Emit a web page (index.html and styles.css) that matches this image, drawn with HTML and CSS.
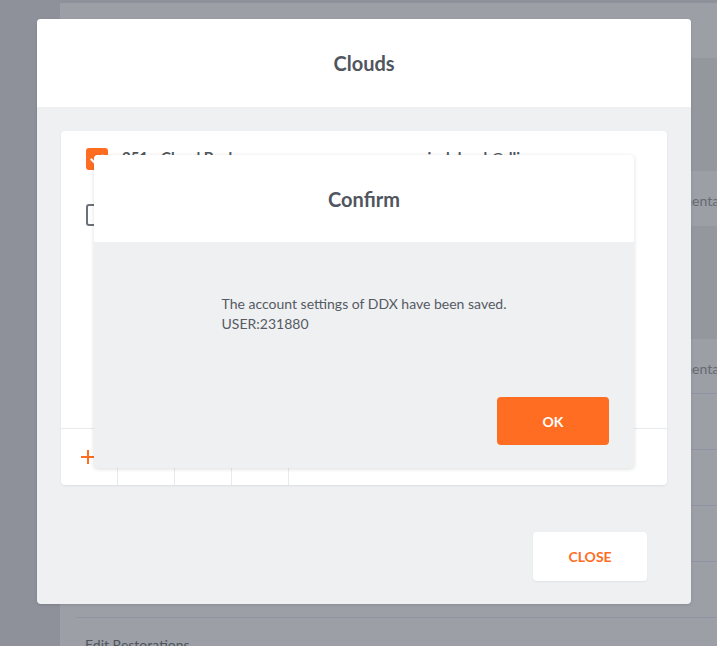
FILE: index.html
```html
<!DOCTYPE html>
<html>
<head>
<meta charset="utf-8">
<link rel="stylesheet" href="styles.css">
</head>
<body>
<div class="page">
  <div class="bg-card">
    <div class="bg-row bg-light"></div>
    <div class="bg-row bg-dark tall"></div>
    <div class="bg-row bg-light"><span class="bg-text">Incrementals</span></div>
    <div class="bg-row bg-dark tall"></div>
    <div class="bg-row bg-light line"><span class="bg-text">Incrementals</span></div>
    <div class="bg-row line"></div>
    <div class="bg-row line"></div>
    <div class="bg-row line"></div>
    <div class="bg-row line"></div>
    <div class="bg-edit">Edit Restorations</div>
  </div>
</div>

<div class="overlay">
  <div class="modal clouds">
    <div class="modal-head">Clouds</div>
    <div class="modal-body">
      <div class="card">
        <div class="card-rows">
          <div class="item">
            <span class="cb checked">
              <svg viewBox="0 0 22 22" width="22" height="22"><path d="M5.5 11.5l3.8 3.8 7.2-7.6" fill="none" stroke="#fff" stroke-width="2.4" stroke-linecap="round" stroke-linejoin="round"/></svg>
            </span>
            <span class="item-name">251 - Cloud Backup</span>
            <span class="item-mail">jack.book@dli.com</span>
          </div>
          <div class="item">
            <span class="cb"></span>
            <span class="item-name">252 - Cloud Storage</span>
          </div>
        </div>
        <div class="card-foot">
          <div class="cell">
            <svg viewBox="0 0 14 14" width="14" height="14"><path d="M7 0v14M0 7h14" stroke="#ff6d22" stroke-width="2" fill="none"/></svg>
          </div>
          <div class="cell"></div>
          <div class="cell"></div>
          <div class="cell"></div>
        </div>
      </div>
      <div class="modal-foot">
        <button class="btn-close">CLOSE</button>
      </div>
    </div>
  </div>
</div>

<div class="overlay top">
  <div class="modal confirm">
    <div class="modal-head">Confirm</div>
    <div class="confirm-body">
      <div class="msg">
        <div>The account settings of DDX have been saved.</div>
        <div>USER:231880</div>
      </div>
      <div class="confirm-foot">
        <button class="btn-ok">OK</button>
      </div>
    </div>
  </div>
</div>
</body>
</html>
```

FILE: styles.css
```css
* { box-sizing: border-box; }
html, body {
  margin: 0;
  padding: 0;
  width: 717px;
  height: 646px;
  overflow: hidden;
}
body {
  background: #8e9199;
  font-family: "Lato", "Liberation Sans", sans-serif;
  position: relative;
}
.page {
  padding: 3px 0 0 60px;
}
.bg-card {
  background: #9c9fa6;
  height: 700px;
  display: flex;
  flex-direction: column;
  padding-left: 16px;
}
.bg-row {
  height: 56px;
  position: relative;
  flex: none;
}
.bg-row.tall { height: 113px; }
.bg-row.bg-light { height: 55px; }
.bg-row.bg-dark { background: #94979e; margin-left: -16px; }
.bg-row.line { border-bottom: 1px solid #8f94a3; }
.bg-text {
  position: absolute;
  left: 574px;
  top: 21px;
  font-size: 14px;
  color: #666a72;
  white-space: nowrap;
}
.bg-edit {
  padding: 18px 0 0 9px;
  font-size: 14px;
  color: #50545c;
}

.overlay {
  position: absolute;
  left: 11px;
  right: 0;
  top: 0;
  display: flex;
  justify-content: center;
}
.modal {
  background: #eff0f2;
  border-radius: 4px;
  overflow: hidden;
}
.clouds {
  width: 654px;
  margin-top: 19px;
  box-shadow: 0 1px 3px rgba(0,0,0,0.12);
}
.modal-head {
  background: #fff;
  height: 88px;
  display: flex;
  align-items: center;
  justify-content: center;
  font-size: 20px;
  font-weight: 700;
  color: #50555e;
}
.modal-body {
  padding: 24px 24px 23px;
}
.card {
  background: #fff;
  border-radius: 4px;
  height: 354px;
  display: flex;
  flex-direction: column;
  box-shadow: 0 1px 2px rgba(0,0,0,0.08);
}
.card-rows {
  flex: 1;
  padding: 17px 25px 0;
  display: flex;
  flex-direction: column;
  gap: 34px;
}
.item {
  display: flex;
  align-items: flex-start;
  height: 22px;
  font-size: 15px;
  line-height: 18px;
  color: #50545c;
}
.cb {
  width: 22px;
  height: 22px;
  border: 2px solid #6b7079;
  border-radius: 3px;
  flex: none;
}
.cb.checked {
  background: #ff6d22;
  border: none;
  display: flex;
}
.item-name { margin-left: 14px; font-weight: 700; }
.item-mail { margin-left: auto; margin-right: 90px; font-weight: 700; }
.card-foot {
  height: 57px;
  border-top: 1px solid #e9eaec;
  display: flex;
}
.cell {
  width: 57px;
  border-right: 1px solid #e9eaec;
  display: flex;
  align-items: center;
  justify-content: center;
  padding-right: 2px;
}
.modal-foot {
  display: flex;
  justify-content: flex-end;
  padding-top: 47px;
  padding-right: 20px;
}
.btn-close {
  width: 114px;
  height: 49px;
  background: #fff;
  border: none;
  border-radius: 4px;
  color: #ff6d22;
  font-family: inherit;
  font-size: 14px;
  font-weight: 700;
  box-shadow: 0 1px 2px rgba(0,0,0,0.06);
}

.confirm {
  width: 540px;
  margin-top: 155px;
  box-shadow: 0 1px 4px rgba(0,0,0,0.14);
}
.confirm .modal-head { height: 87px; }
.confirm-body {
  height: 226px;
  padding-top: 52px;
  display: flex;
  flex-direction: column;
}
.msg {
  align-self: center;
  font-size: 14px;
  line-height: 20px;
  color: #555a63;
}
.confirm-foot {
  display: flex;
  justify-content: flex-end;
  padding: 0 25px 0 0;
  margin-top: 63px;
}
.btn-ok {
  width: 112px;
  height: 48px;
  background: #ff6d22;
  border: none;
  border-radius: 4px;
  color: #fff;
  font-family: inherit;
  font-size: 14px;
  font-weight: 700;
}
```
